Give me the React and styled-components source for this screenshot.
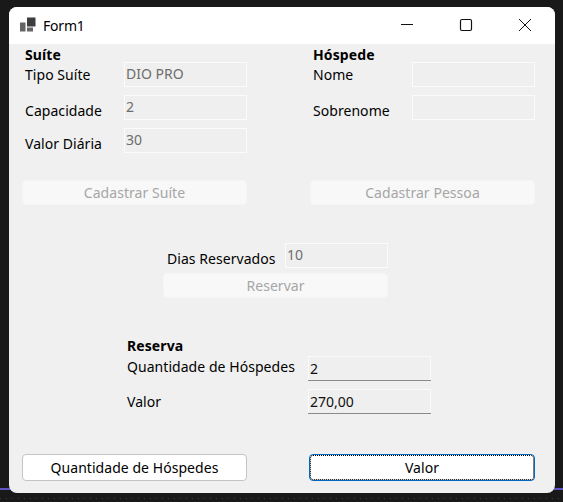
import React from 'react'
import styled, { createGlobalStyle } from 'styled-components'

const GlobalStyle = createGlobalStyle`
    html, body {
        margin: 0;
        height: 100%;
        overflow: hidden;
        background: #191919;
    }
    * { box-sizing: border-box; }
`

const Desktop = styled.div`
    position: relative;
    width: 563px;
    height: 502px;
    padding: 7px 8px 0 9px;
    font-family: "Noto Sans", "Open Sans", sans-serif;
    font-size: 14px;
    color: #000;
`

// the bits of whatever sits behind the form
const AccentLine = styled.div`
    position: absolute;
    left: 0;
    right: 0;
    top: 488px;
    height: 2px;
    background: #5f55c4;
`

const DottedStrip = styled.div`
    position: absolute;
    left: 0;
    right: 0;
    top: 498px;
    height: 1px;
    background: repeating-linear-gradient(90deg, #3a3a3a 0 1px, transparent 1px 6px);
`

const Window = styled.div`
    position: relative;
    height: 486px;
    background: #f0f0f0;
    border-radius: 8px;
    overflow: hidden;
`

const TitleBar = styled.div`
    height: 37px;
    background: #fff;
    display: flex;
    align-items: center;
    padding: 0 1px 0 11px;
`

const AppIcon = styled.svg`
    width: 18px;
    height: 18px;
    margin-right: 5px;
`

const Title = styled.div`
    flex: 1;
    font-size: 14px;
    letter-spacing: -0.2px;
`

const CaptionButton = styled.div`
    width: 59px;
    height: 36px;
    margin-bottom: 1px;
    display: flex;
    align-items: center;
    justify-content: center;
`

const Content = styled.div`
    padding: 0 20px 0 13px;
`

const Columns = styled.div`
    display: flex;
    gap: 63px;
`

const Column = styled.div`
    width: 225px;
`

const Heading = styled.div`
    height: 18px;
    line-height: ${p => p.$line || 21}px;
    font-weight: 700;
    font-size: 14px;
    letter-spacing: 0.1px;
    padding-left: ${p => p.$indent || 0}px;
`

const Fields = styled.div`
    height: 118px;
    display: flex;
    flex-direction: column;
    gap: 8px;
`

const Row = styled.div`
    display: flex;
    align-items: center;
    height: 25px;
`

const Label = styled.div`
    width: ${p => p.$width}px;
    padding-left: ${p => p.$indent || 0}px;
    padding-top: ${p => p.$drop || 0}px;
    padding-bottom: ${p => p.$lift || 0}px;
    white-space: nowrap;
    letter-spacing: 0.05px;
    line-height: 20px;
`

const TextBox = styled.div`
    width: ${p => p.$width || 123}px;
    height: 25px;
    padding: 0 1px;
    border: 1px solid #fbfbfb;
    color: #6d6d6d;
    line-height: 21px;
    background: #efefef;
`

const ResultBox = styled.div`
    width: 123px;
    height: 24px;
    margin-bottom: 1px;
    padding: 1px 1px 0;
    border: 1px solid #fafafa;
    border-bottom: none;
    box-shadow: 0 1px 0 #8a8a8a;
    color: #111;
    line-height: 21px;
    background: #efefef;
`

const Button = styled.div`
    width: ${p => p.$width || 225}px;
    height: ${p => p.$height || 25}px;
    display: flex;
    align-items: center;
    justify-content: center;
    border-radius: 4px;
    background: #fff;
    border: 1px solid #c4c4c4;
    letter-spacing: 0.05px;
`

const DisabledButton = styled(Button)`
    background: #f8f8f8;
    border-color: #f5f5f5;
    color: #a6a6a6;
`

const FocusButton = styled(Button)`
    border: 1px solid #0067c0;
    outline: 1px dotted #000;
    outline-offset: -2px;
`

const Booking = styled.div`
    width: 225px;
    margin: 38px 0 0 141px;
`

const BookingRow = styled(Row)`
    margin-bottom: 5px;
`

const Summary = styled.div`
    margin: 40px 0 0 105px;
`

const SummaryFields = styled.div`
    display: flex;
    flex-direction: column;
    gap: 8px;
`

const Footer = styled.div`
    display: flex;
    gap: 62px;
    margin-top: 40px;
`

export default function App() {
    return (
        <Desktop>
            <GlobalStyle />
            <AccentLine />
            <DottedStrip />
            <Window>
                <TitleBar>
                    <AppIcon viewBox="0 0 18 18">
                        <rect x="7" y="0.5" width="8.5" height="9" fill="#3d3d3d" />
                        <rect x="0" y="5.5" width="5.5" height="9" fill="#646464" />
                        <rect x="7" y="10.5" width="6" height="4" fill="#646464" />
                    </AppIcon>
                    <Title>Form1</Title>
                    <CaptionButton>
                        <svg width="14" height="14" viewBox="0 0 14 14">
                            <path d="M1 6.5H13" stroke="#111" strokeWidth="1" fill="none" />
                        </svg>
                    </CaptionButton>
                    <CaptionButton>
                        <svg width="14" height="14" viewBox="0 0 14 14">
                            <rect x="1.5" y="1.5" width="11" height="11" rx="1.5" stroke="#111" strokeWidth="1.2" fill="none" />
                        </svg>
                    </CaptionButton>
                    <CaptionButton>
                        <svg width="14" height="14" viewBox="0 0 14 14">
                            <path d="M1 1L13 13M13 1L1 13" stroke="#111" strokeWidth="1" fill="none" />
                        </svg>
                    </CaptionButton>
                </TitleBar>
                <Content>
                    <Columns>
                        <Column>
                            <Heading $indent={3}>Suíte</Heading>
                            <Fields>
                                <Row>
                                    <Label $width={102} $indent={3} $drop={1}>Tipo Suíte</Label>
                                    <TextBox>DIO PRO</TextBox>
                                </Row>
                                <Row>
                                    <Label $width={102} $indent={3} $drop={6}>Capacidade</Label>
                                    <TextBox>2</TextBox>
                                </Row>
                                <Row>
                                    <Label $width={102} $indent={3} $drop={6}>Valor Diária</Label>
                                    <TextBox>30</TextBox>
                                </Row>
                            </Fields>
                            <DisabledButton>Cadastrar Suíte</DisabledButton>
                        </Column>
                        <Column>
                            <Heading $indent={3}>Hóspede</Heading>
                            <Fields>
                                <Row>
                                    <Label $width={102} $indent={3} $drop={1}>Nome</Label>
                                    <TextBox />
                                </Row>
                                <Row>
                                    <Label $width={102} $indent={3} $drop={6}>Sobrenome</Label>
                                    <TextBox />
                                </Row>
                            </Fields>
                            <DisabledButton>Cadastrar Pessoa</DisabledButton>
                        </Column>
                    </Columns>
                    <Booking>
                        <BookingRow>
                            <Label $width={122} $indent={4} $drop={6}>Dias Reservados</Label>
                            <TextBox $width={103}>10</TextBox>
                        </BookingRow>
                        <DisabledButton>Reservar</DisabledButton>
                    </Booking>
                    <Summary>
                        <Heading $line={16}>Reserva</Heading>
                        <SummaryFields>
                            <Row>
                                <Label $width={181} $lift={4}>Quantidade de Hóspedes</Label>
                                <ResultBox>2</ResultBox>
                            </Row>
                            <Row>
                                <Label $width={181}>Valor</Label>
                                <ResultBox>270,00</ResultBox>
                            </Row>
                        </SummaryFields>
                    </Summary>
                    <Footer>
                        <Button $height={27}>Quantidade de Hóspedes</Button>
                        <FocusButton $width={226} $height={27}>Valor</FocusButton>
                    </Footer>
                </Content>
            </Window>
        </Desktop>
    )
}
